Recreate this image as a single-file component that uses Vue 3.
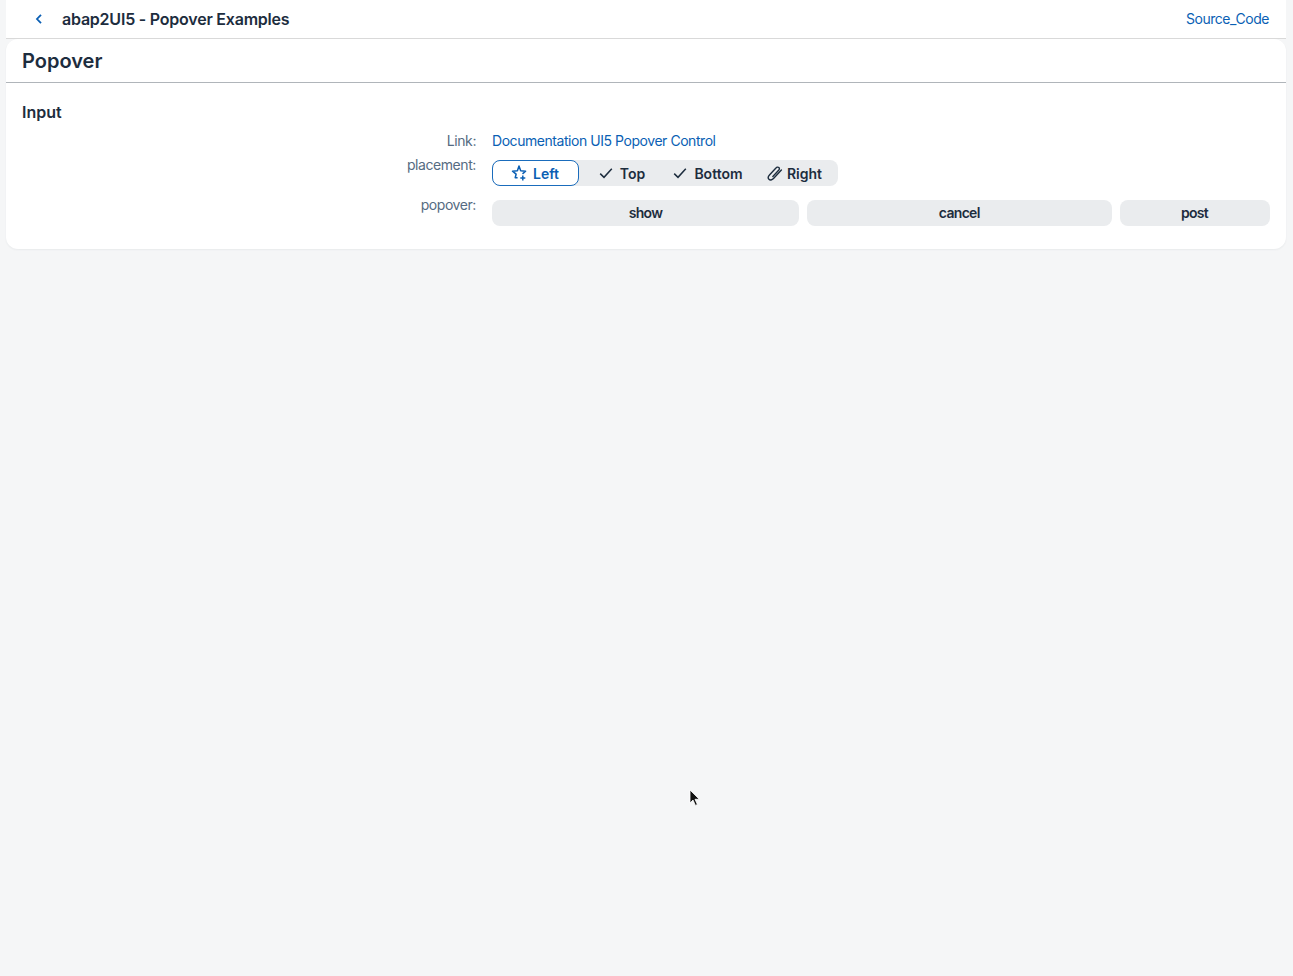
<template>
  <div class="page">
    <header class="top-bar">
      <button class="back" aria-label="Back">
        <svg width="12" height="12" viewBox="0 0 12 12"><path d="M8 1.800 4 6l4 4.200" fill="none" stroke="#0a5fb4" stroke-width="1.8" /></svg>
      </button>
      <span class="app-title">abap2UI5 - Popover Examples</span>
      <a class="link source">Source_Code</a>
    </header>

    <section class="card">
      <h1 class="page-title">Popover</h1>
      <div class="body">
        <h2 class="form-title">Input</h2>
        <div class="form">
          <label class="lbl lbl-link">Link:</label>
          <a class="link doc">Documentation UI5 Popover Control</a>

          <label class="lbl">placement:</label>
          <div class="segmented">
            <button v-for="item in placements" :key="item.text" class="seg" :class="[item.cls, { active: item.active }]">
              <svg v-if="item.icon === 'star'" class="ico" width="18" height="18" viewBox="0 0 18 18" fill="none" stroke="#0a5fb4" stroke-width="1.500">
                <path d="M7.600 13.700H5.200l.9-3.500-3.600-3 4.900-.5L9 2l1.700 4.700 4.900.5-3.100 2.700" stroke-linejoin="round" />
                <path d="M12.800 11.600v5M10.300 14.100h5" />
              </svg>
              <svg v-else-if="item.icon === 'check'" class="ico" width="14" height="14" viewBox="0 0 14 14" fill="none" stroke="#1d2d3e" stroke-width="1.500">
                <path d="M1.200 7.600 5 11.300l7.800-8.600" />
              </svg>
              <svg v-else class="ico" width="16" height="17" viewBox="0 0 15 16" fill="none" stroke="#1d2d3e" stroke-width="1.300">
                <path d="M5.500 10.800 10.900 5c.8-.9.9-1.900.2-2.600s-1.900-.5-2.700.4L2.500 9.100c-1.500 1.600-1.700 3.400-.7 4.400s2.800.8 4.300-.8l7.400-8" stroke-linecap="round" stroke-linejoin="round" />
              </svg>
              <span>{{ item.text }}</span>
            </button>
          </div>

          <label class="lbl">popover:</label>
          <div class="actions">
            <button v-for="label in actions" :key="label" class="action">{{ label }}</button>
          </div>
        </div>
      </div>
    </section>

    <svg class="cursor" width="12" height="18" viewBox="0 0 12 18">
      <path d="M1 1v13l3-3 2.400 5.400 2-.9L6 10.300h4.300z" fill="#111" stroke="#fff" stroke-width=".8" />
    </svg>
  </div>
</template>

<script setup>
const placements = [
  { text: 'Left', icon: 'star', cls: 'seg-left', active: true },
  { text: 'Top', icon: 'check', cls: 'seg-top' },
  { text: 'Bottom', icon: 'check', cls: 'seg-bottom' },
  { text: 'Right', icon: 'clip', cls: 'seg-right' }
]

const actions = ['show', 'cancel', 'post']
</script>

<style>
html,
body {
  margin: 0;
  background: #f5f6f7;
}
</style>

<style scoped>
.page {
  position: relative;
  height: 976px;
  padding: 0 7px 0 6px;
  box-sizing: border-box;
  background: #f5f6f7;
  font-family: Inter, "Noto Sans", sans-serif;
  font-size: 14px;
  color: #1d2d3e;
  overflow: hidden;
}

.top-bar {
  display: flex;
  align-items: center;
  height: 39px;
  padding: 0 17px 1px 27px;
  background: #fff;
  border-bottom: 1px solid #d9d9d9;
  box-sizing: border-box;
}

.back {
  display: flex;
  width: 12px;
  height: 12px;
  padding: 0;
  border: 0;
  background: none;
}

.app-title {
  margin-left: 17px;
  font-size: 16px;
  font-weight: 600;
  letter-spacing: -0.22px;
}

.link {
  color: #0a5fb4;
  font-size: 14px;
  letter-spacing: -0.45px;
}

.source {
  margin-left: auto;
}

.card {
  height: 210px;
  background: #fff;
  border-radius: 12px;
  box-shadow: 0 1px 2px rgba(34, 53, 72, 0.06);
}

.page-title {
  margin: 0;
  height: 44px;
  padding-left: 16px;
  box-sizing: border-box;
  border-bottom: 1px solid #b0b5ba;
  font-size: 20px;
  font-weight: 600;
  line-height: 44px;
}

.body {
  padding: 20px 16px 0;
}

.form-title {
  margin: 0;
  font-size: 16px;
  font-weight: 600;
  line-height: 19px;
}

.form {
  display: grid;
  grid-template-columns: 454px 778px;
  column-gap: 16px;
  margin-top: 1px;
}

.lbl {
  margin-top: -4px;
  color: #556b82;
  font-size: 14px;
  letter-spacing: -0.42px;
  line-height: 17px;
  text-align: right;
}

.lbl-link {
  margin-top: 0;
  padding-top: 9px;
}

.doc {
  padding-top: 9px;
  line-height: 17px;
  height: 37px;
  box-sizing: border-box;
}

.segmented {
  display: flex;
  align-items: center;
  width: 346px;
  height: 26px;
  margin-bottom: 14px;
  border-radius: 8px;
  background: #eaecee;
}

.seg {
  display: flex;
  align-items: center;
  justify-content: center;
  height: 26px;
  padding: 0;
  border: 0;
  background: none;
  color: #1d2d3e;
  font: 600 14px Inter, "Noto Sans", sans-serif;
}

.ico {
  flex: none;
}

.seg-left {
  width: 87px;
  padding-right: 2px;
  gap: 5px;
  box-sizing: border-box;
  border: 1px solid #1a6cbc;
  border-radius: 8px;
  background: #fff;
  color: #0a5fb4;
}

.seg-top {
  width: 74px;
  margin-left: 6px;
  gap: 7px;
}

.seg-bottom {
  width: 98px;
  gap: 7px;
}

.seg-right {
  width: 75px;
  gap: 4px;
}

.actions {
  display: grid;
  grid-template-columns: 307px 305.500px 150px;
  column-gap: 7.500px;
}

.action {
  height: 26px;
  padding: 0 0 2px;
  border: 0;
  border-radius: 8px;
  background: #eaecee;
  color: #1d2d3e;
  font: 600 14px Inter, "Noto Sans", sans-serif;
  letter-spacing: -0.7px;
}

.cursor {
  position: absolute;
  left: 689px;
  top: 789px;
}
</style>
